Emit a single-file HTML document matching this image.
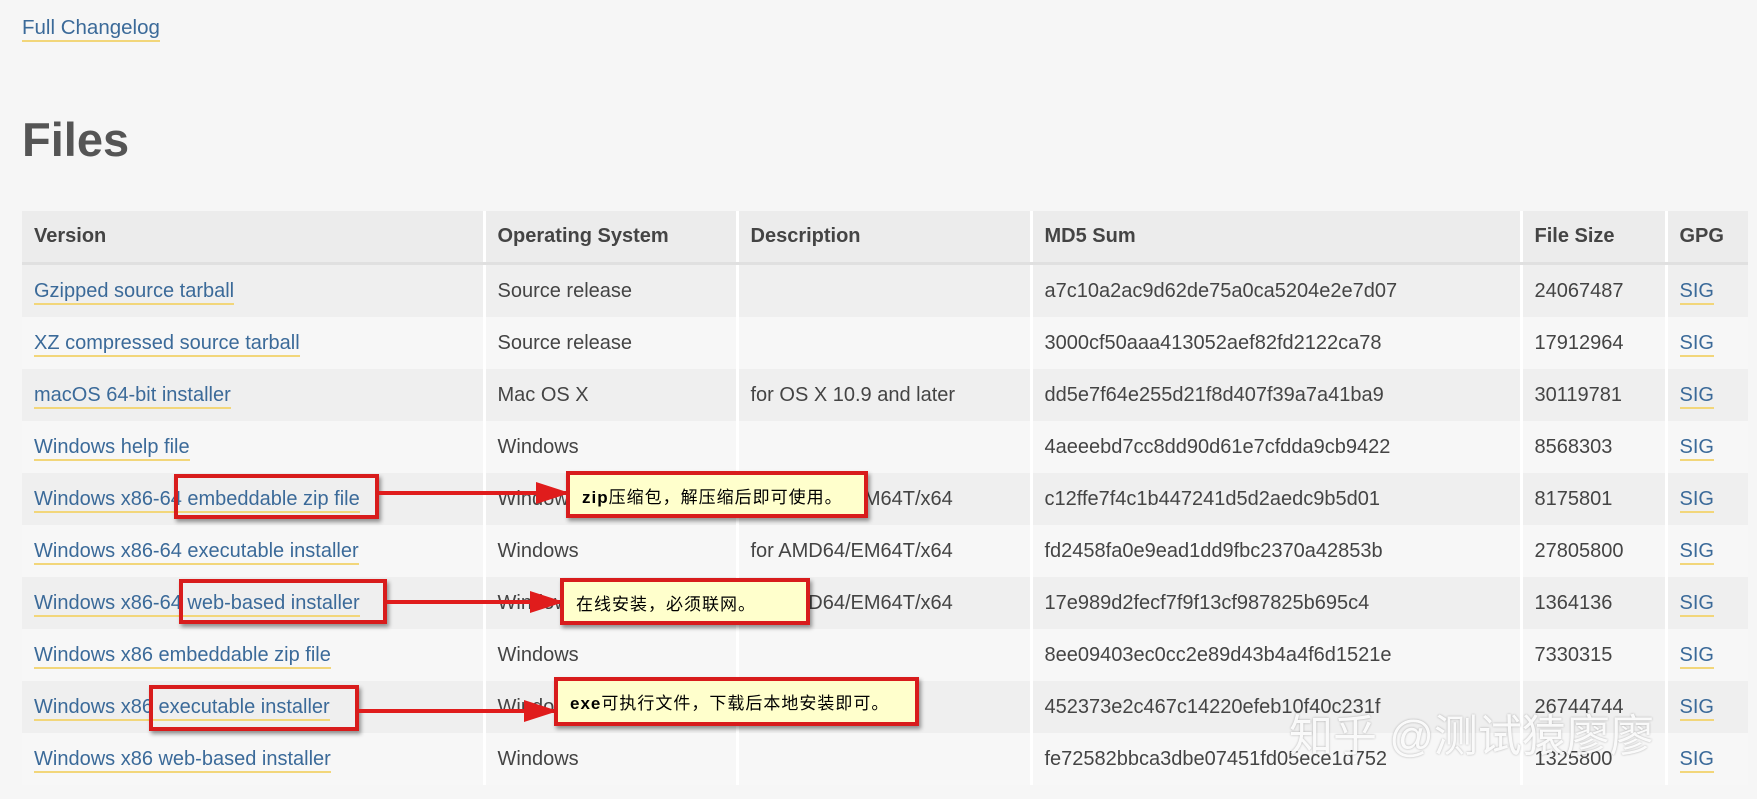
<!DOCTYPE html>
<html><head><meta charset="utf-8"><style>
body{margin:0;width:1757px;height:799px;background:#f6f6f6;font-family:"Liberation Sans","Noto Sans CJK SC",sans-serif;position:relative;overflow:hidden;color:#444}
a{color:#3b6a99;text-decoration:none;border-bottom:2px solid #f2d67a;padding-bottom:1px}
.cl{position:absolute;left:22px;top:16px;font-size:20.5px}
h1{position:absolute;left:22px;top:112px;margin:0;font-size:47px;font-weight:bold;color:#555}
table{position:absolute;left:22px;top:211px;border-collapse:collapse;font-size:20px}
td,th{height:52px;padding:0 0 0 12px;text-align:left;border-right:3px solid #fff;white-space:nowrap}
th{background:#ececec;height:51px;border-bottom:3px solid #e0e0e0;font-weight:bold;color:#444}
tr:nth-child(odd) td{background:#f7f7f7}
tr:nth-child(even) td{background:#efefef}
td:last-child,th:last-child{border-right:none}
.box{position:absolute;border:4px solid #d81c1c;box-shadow:2px 3px 4px rgba(0,0,0,.4)}
.call{position:absolute;border:4px solid #d81c1c;background:#ffffcc;box-shadow:2px 3px 4px rgba(0,0,0,.4);font-size:17px;color:#000;padding:8px 0 0 12px;box-sizing:border-box;letter-spacing:1px}
.call b{font-family:"Liberation Sans",sans-serif}
.arr{position:absolute;height:4px;background:#e01c1c}
.arr:after{content:"";position:absolute;right:-4px;top:-9px;border-left:34px solid #e01c1c;border-top:11px solid transparent;border-bottom:11px solid transparent}
.wm{position:absolute;left:1289px;top:700px;font-size:44px;color:rgba(255,255,255,.92);text-shadow:0 0 2px rgba(0,0,0,.3);white-space:nowrap}
</style></head><body>
<div class="cl"><a>Full Changelog</a></div>
<h1>Files</h1>
<table>
<colgroup><col style="width:462px"><col style="width:253px"><col style="width:294px"><col style="width:490px"><col style="width:145px"><col style="width:82px"></colgroup>
<tr><th>Version</th><th>Operating System</th><th>Description</th><th>MD5 Sum</th><th>File Size</th><th>GPG</th></tr>
<tr><td><a>Gzipped source tarball</a></td><td>Source release</td><td></td><td>a7c10a2ac9d62de75a0ca5204e2e7d07</td><td>24067487</td><td><a>SIG</a></td></tr>
<tr><td><a>XZ compressed source tarball</a></td><td>Source release</td><td></td><td>3000cf50aaa413052aef82fd2122ca78</td><td>17912964</td><td><a>SIG</a></td></tr>
<tr><td><a>macOS 64-bit installer</a></td><td>Mac OS X</td><td>for OS X 10.9 and later</td><td>dd5e7f64e255d21f8d407f39a7a41ba9</td><td>30119781</td><td><a>SIG</a></td></tr>
<tr><td><a>Windows help file</a></td><td>Windows</td><td></td><td>4aeeebd7cc8dd90d61e7cfdda9cb9422</td><td>8568303</td><td><a>SIG</a></td></tr>
<tr><td><a>Windows x86-64 embeddable zip file</a></td><td>Windows</td><td>for AMD64/EM64T/x64</td><td>c12ffe7f4c1b447241d5d2aedc9b5d01</td><td>8175801</td><td><a>SIG</a></td></tr>
<tr><td><a>Windows x86-64 executable installer</a></td><td>Windows</td><td>for AMD64/EM64T/x64</td><td>fd2458fa0e9ead1dd9fbc2370a42853b</td><td>27805800</td><td><a>SIG</a></td></tr>
<tr><td><a>Windows x86-64 web-based installer</a></td><td>Windows</td><td>for AMD64/EM64T/x64</td><td>17e989d2fecf7f9f13cf987825b695c4</td><td>1364136</td><td><a>SIG</a></td></tr>
<tr><td><a>Windows x86 embeddable zip file</a></td><td>Windows</td><td></td><td>8ee09403ec0cc2e89d43b4a4f6d1521e</td><td>7330315</td><td><a>SIG</a></td></tr>
<tr><td><a>Windows x86 executable installer</a></td><td>Windows</td><td></td><td>452373e2c467c14220efeb10f40c231f</td><td>26744744</td><td><a>SIG</a></td></tr>
<tr><td><a>Windows x86 web-based installer</a></td><td>Windows</td><td></td><td>fe72582bbca3dbe07451fd05ece1d752</td><td>1325800</td><td><a>SIG</a></td></tr>
</table>
<div class="box" style="left:174px;top:474px;width:197px;height:37px"></div>
<div class="arr" style="left:379px;top:491px;width:187px"></div>
<div class="call" style="left:566px;top:471px;width:302px;height:47px"><b>zip</b>压缩包，解压缩后即可使用。</div>
<div class="box" style="left:179px;top:579px;width:200px;height:37px"></div>
<div class="arr" style="left:387px;top:600px;width:173px"></div>
<div class="call" style="left:560px;top:578px;width:250px;height:47px">在线安装，必须联网。</div>
<div class="box" style="left:149px;top:685px;width:202px;height:38px"></div>
<div class="arr" style="left:359px;top:709px;width:195px"></div>
<div class="call" style="left:554px;top:677px;width:365px;height:49px"><b>exe</b>可执行文件，下载后本地安装即可。</div>
<div class="wm">知乎 @测试猿廖廖</div>
</body></html>
